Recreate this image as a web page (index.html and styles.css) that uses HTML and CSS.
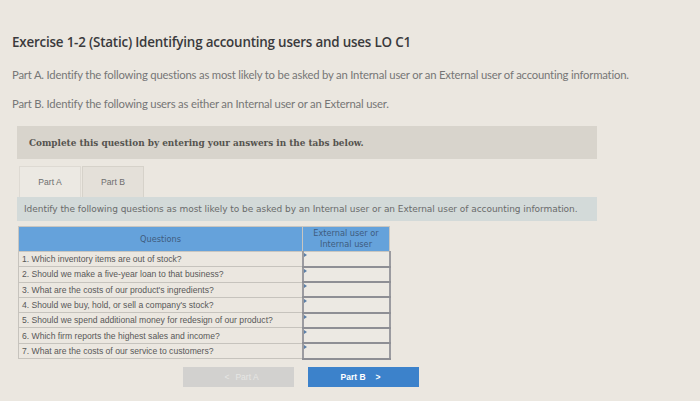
FILE: index.html
```html
<!DOCTYPE html>
<html>
<head>
<meta charset="utf-8">
<link rel="stylesheet" href="styles.css">
</head>
<body>
<div class="page">
  <h1 class="title">Exercise 1-2 (Static) Identifying accounting users and uses LO C1</h1>
  <p class="intro first">Part A. Identify the following questions as most likely to be asked by an Internal user or an External user of accounting information.</p>
  <p class="intro second">Part B. Identify the following users as either an Internal user or an External user.</p>

  <div class="question">
    <div class="notice">Complete this question by entering your answers in the tabs below.</div>
    <div class="tabs">
      <div class="tab active">Part A</div>
      <div class="tab">Part B</div>
    </div>
    <div class="strip">Identify the following questions as most likely to be asked by an Internal user or an External user of accounting information.</div>

    <table class="grid">
      <thead>
        <tr><th class="qh">Questions</th><th class="ah">External user or<br>Internal user</th></tr>
      </thead>
      <tbody>
        <tr><td class="q">1. Which inventory items are out of stock?</td><td class="a"><span class="mark"></span></td></tr>
        <tr><td class="q">2. Should we make a five-year loan to that business?</td><td class="a"><span class="mark"></span></td></tr>
        <tr><td class="q">3. What are the costs of our product's ingredients?</td><td class="a"><span class="mark"></span></td></tr>
        <tr><td class="q">4. Should we buy, hold, or sell a company's stock?</td><td class="a"><span class="mark"></span></td></tr>
        <tr><td class="q">5. Should we spend additional money for redesign of our product?</td><td class="a"><span class="mark"></span></td></tr>
        <tr><td class="q">6. Which firm reports the highest sales and income?</td><td class="a"><span class="mark"></span></td></tr>
        <tr><td class="q">7. What are the costs of our service to customers?</td><td class="a"><span class="mark"></span></td></tr>
      </tbody>
    </table>

    <div class="nav">
      <div class="btn prev"><span class="chev">&lt;</span> Part A</div>
      <div class="btn next">Part B <span class="chev">&gt;</span></div>
    </div>
  </div>
</div>
</body>
</html>
```

FILE: styles.css
```css
html, body {
  margin: 0;
  padding: 0;
}
body {
  background: #ebe7e0;
  width: 700px;
  height: 401px;
  overflow: hidden;
}
.page {
  padding: 33px 0 0 12px;
}
.title {
  margin: 0;
  font-family: "Open Sans", sans-serif;
  font-weight: 600;
  font-size: 13.4px;
  line-height: 18px;
  color: #3a3a3c;
  letter-spacing: -0.2px;
}
.intro {
  margin: 0;
  font-family: "Lato", sans-serif;
  font-size: 11.3px;
  line-height: 14px;
  color: #767676;
  letter-spacing: -0.2px;
}
.intro.first {
  margin-top: 17px;
}
.intro.second {
  margin-top: 15px;
}
.question {
  margin-left: 5px;
  margin-top: 15px;
  width: 580px;
}
.notice {
  background: #d8d4cc;
  height: 33px;
  padding-left: 12px;
  display: flex;
  align-items: center;
  font-family: "DejaVu Serif", serif;
  font-weight: bold;
  font-size: 8.9px;
  color: #55534f;
}
.tabs {
  display: flex;
  margin-top: 7px;
  padding-left: 2px;
}
.tab {
  width: 62px;
  height: 31px;
  display: flex;
  align-items: center;
  justify-content: center;
  font-family: "Liberation Sans", sans-serif;
  font-size: 8.6px;
  color: #6e6e6e;
  background: #e4e0d9;
  border: 1px solid #d6d2ca;
  border-bottom: none;
  box-sizing: border-box;
}
.tab.active {
  background: #ece9e3;
  border-color: #dedad3;
}
.tab + .tab {
  margin-left: 1px;
}
.strip {
  background: #d3dad9;
  height: 24px;
  display: flex;
  align-items: center;
  padding-left: 7px;
  font-family: "DejaVu Sans", sans-serif;
  font-size: 9px;
  color: #6a6b6b;
  letter-spacing: -0.05px;
}
.grid {
  margin-top: 5px;
  margin-left: 1px;
  border-collapse: collapse;
  font-family: "Liberation Sans", sans-serif;
}
.grid th {
  background: #65a2db;
  color: #3f5c7e;
  font-weight: normal;
  font-family: "DejaVu Sans", sans-serif;
  font-size: 8.2px;
  line-height: 11px;
  height: 24px;
  padding: 0;
  border: 1px solid #c9c6c0;
}
.qh {
  width: 283px;
}
.ah {
  width: 86px;
}
.grid td {
  height: 15.3px;
  padding: 0;
  box-sizing: border-box;
}
.q {
  font-size: 8.6px;
  color: #585858;
  padding-left: 3px !important;
  border: 1px solid #c6c3bd;
  white-space: nowrap;
}
.a {
  border-left: 2px solid #9b9ba0;
  border-right: 2px solid #9b9ba0;
  border-bottom: 2px solid #8e8f95;
  position: relative;
  background: #ece9e3;
}
.mark {
  position: absolute;
  left: 0;
  top: 1px;
  width: 0;
  height: 0;
  border-top: 2px solid transparent;
  border-bottom: 2px solid transparent;
  border-left: 3px solid #5b7fa8;
}
.nav {
  display: flex;
  gap: 14px;
  margin-top: 7px;
  margin-left: 166px;
}
.btn {
  width: 111px;
  height: 20px;
  display: flex;
  align-items: center;
  justify-content: center;
  font-family: "Liberation Sans", sans-serif;
  font-size: 8.5px;
  font-weight: bold;
}
.btn.prev {
  background: #d2d1cf;
  color: #e6e6e4;
  font-weight: normal;
}
.btn.next {
  background: #3c82cb;
  color: #ffffff;
}
.chev {
  margin: 0 6px;
}
.btn.next .chev {
  margin-left: 10px;
}
```
